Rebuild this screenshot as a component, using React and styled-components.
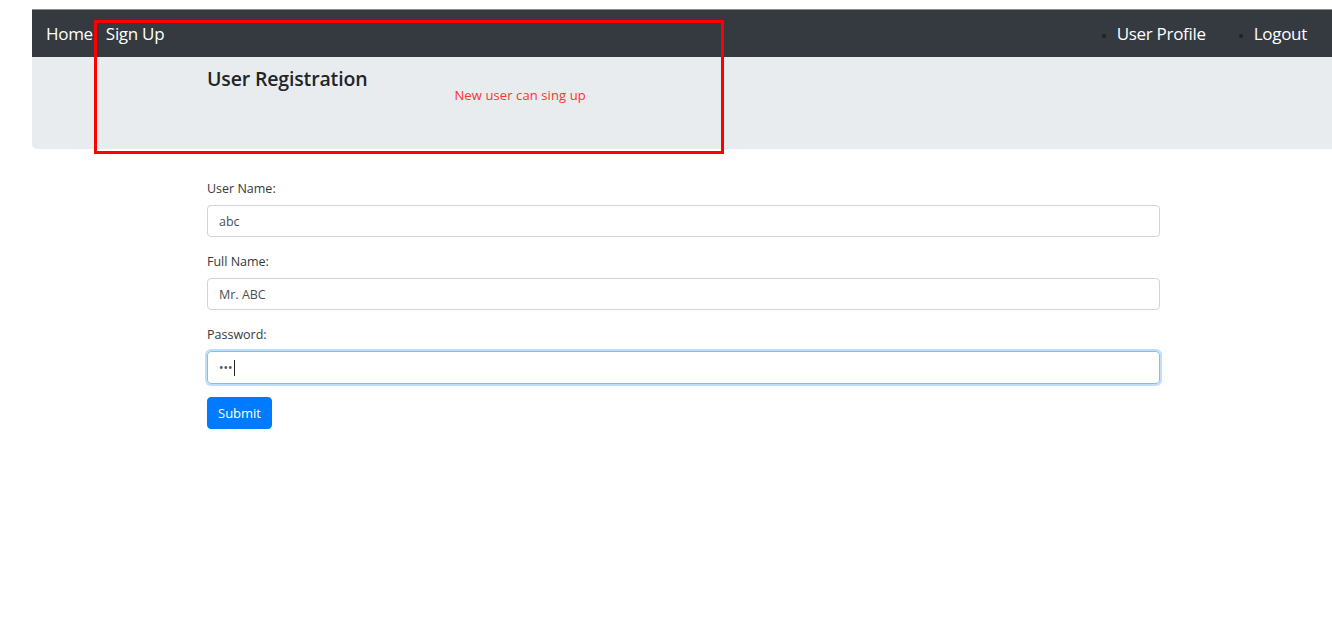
import React from "react";
import styled, { createGlobalStyle } from "styled-components";

const GlobalStyle = createGlobalStyle`
  html, body { margin: 0; padding: 0; background: #fff; }
  body { font-family: "Open Sans", "Noto Sans", sans-serif; color: #212529; }
  * { box-sizing: border-box; }
`;

const Page = styled.div`
  position: relative;
  padding: 9px 0 0 32px;
  min-height: 640px;
`;

const Navbar = styled.nav`
  height: 48px;
  background: #343a40;
  border-top: 1px solid #8a8d91;
  display: flex;
  align-items: center;
  justify-content: space-between;
  padding-left: 14px;
`;

const NavLeft = styled.div`
  display: flex;
  align-items: center;
  gap: 13px;
`;

const NavLink = styled.a`
  color: #fff;
  font-size: 17px;
  text-decoration: none;
  letter-spacing: -0.3px;
`;

const NavList = styled.ul`
  display: flex;
  margin: 0;
  padding: 0 25px 0 0;
  gap: 48px;
`;

const NavItem = styled.li`
  list-style: disc;
  color: #1e2226;
  font-size: 17px;
  &::marker { font-size: 12px; }
`;

const Jumbotron = styled.div`
  height: 92px;
  background: #e9ecef;
  border-bottom-left-radius: 5px;
  padding: 8px 0 0 175px;
  display: flex;
  align-items: flex-start;
`;

const Title = styled.h4`
  margin: 0;
  font-size: 19.5px;
  font-weight: 600;
  color: #212529;
  letter-spacing: -0.15px;
`;

const Subtitle = styled.p`
  margin: 21px 0 0 87px;
  font-size: 13px;
  color: #ff3030;
  letter-spacing: 0.1px;
`;

const Form = styled.form`
  width: 953px;
  margin: 31px 0 0 175px;
  display: flex;
  flex-direction: column;
`;

const Group = styled.div`
  display: flex;
  flex-direction: column;
  margin-bottom: ${(p) => (p.$last ? "13px" : "16px")};
`;

const Label = styled.label`
  font-size: 12.5px;
  color: #343a40;
  margin-bottom: 7px;
  line-height: 18px;
`;

const Input = styled.input`
  height: 32px;
  width: 100%;
  padding: 0 11px;
  font-family: inherit;
  font-size: 12.5px;
  color: #495057;
  border: 1px solid #ced4da;
  border-radius: 4px;
  outline: none;
  background: #fff;
`;

const PasswordBox = styled.div`
  height: 33px;
  width: 100%;
  padding: 0 11px;
  display: flex;
  align-items: center;
  border: 1px solid #80bdff;
  border-radius: 4px;
  box-shadow: 0 0 0 2px rgba(0, 123, 255, 0.25);
  color: #495057;
  font-size: 12px;
`;

const Caret = styled.span`
  display: inline-block;
  width: 1px;
  height: 16px;
  background: #222;
  margin-left: 1px;
`;

const SubmitButton = styled.button`
  align-self: flex-start;
  height: 32px;
  padding: 0 10px;
  background: #007bff;
  color: #fff;
  border: 1px solid #007bff;
  border-radius: 4px;
  font-family: inherit;
  font-size: 13px;
  cursor: pointer;
`;

const Highlight = styled.div`
  position: absolute;
  left: 94px;
  top: 20px;
  width: 630px;
  height: 134px;
  border: 3px solid #ff0000;
  pointer-events: none;
`;

export default function App() {
  return (
    <>
      <GlobalStyle />
      <Page>
        <Navbar>
          <NavLeft>
            <NavLink href="#">Home</NavLink>
            <NavLink href="#">Sign Up</NavLink>
          </NavLeft>
          <NavList>
            <NavItem>
              <NavLink href="#">User Profile</NavLink>
            </NavItem>
            <NavItem>
              <NavLink href="#">Logout</NavLink>
            </NavItem>
          </NavList>
        </Navbar>
        <Jumbotron>
          <Title>User Registration</Title>
          <Subtitle>New user can sing up</Subtitle>
        </Jumbotron>
        <Form onSubmit={(e) => e.preventDefault()}>
          <Group>
            <Label>User Name:</Label>
            <Input defaultValue="abc" />
          </Group>
          <Group>
            <Label>Full Name:</Label>
            <Input defaultValue="Mr. ABC" />
          </Group>
          <Group $last>
            <Label>Password:</Label>
            <PasswordBox>
              •••<Caret />
            </PasswordBox>
          </Group>
          <SubmitButton type="submit">Submit</SubmitButton>
        </Form>
        <Highlight />
      </Page>
    </>
  );
}
